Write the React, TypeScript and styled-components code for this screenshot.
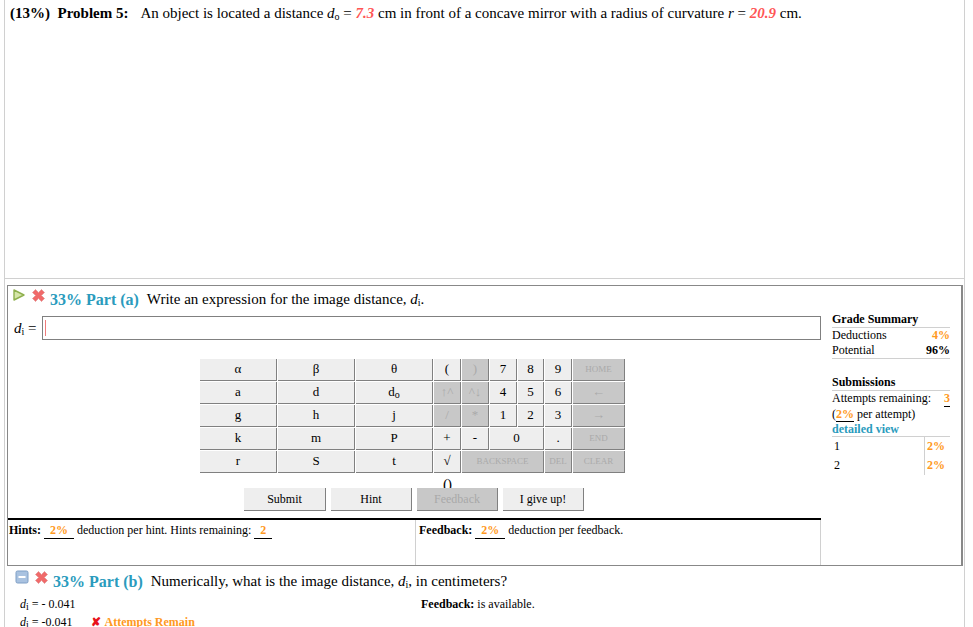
import React from 'react'
import styled, { createGlobalStyle } from 'styled-components'

const GlobalStyle = createGlobalStyle`
  html, body {
    margin: 0;
    padding: 0;
    background: #fff;
    overflow: hidden;
  }
  body {
    font-family: "Liberation Serif", "Times New Roman", serif;
    color: #000;
  }
`

const Page = styled.div`
  width: 973px;
  height: 627px;
  overflow: hidden;
  background: #fff;
`

const Shell = styled.div`
  box-sizing: border-box;
  margin-left: 4px;
  width: 961px;
  height: 627px;
  border-left: 1px solid #d0d0d0;
  border-right: 1px solid #d0d0d0;
`

const ProblemSection = styled.section`
  box-sizing: border-box;
  height: 279px;
  padding: 4px 0 0 5px;
  border-bottom: 1px solid #d0d0d0;
  font-size: 15px;
  line-height: 18px;
`

const ProblemTitle = styled.b`
  margin-right: 12px;
  white-space: pre;
`

const Given = styled.i`
  color: #ff5555;
  font-weight: bold;
`

const Sub = styled.sub`
  font-size: 10px;
  font-style: normal;
  line-height: 0;
  vertical-align: -2px;
`

const Var = styled.i`
  font-style: italic;
`

const PartBox = styled.section`
  box-sizing: border-box;
  margin: 6px 0 0 2px;
  width: 956px;
  height: 281px;
  border: 1px solid #888;
  border-right-width: 2px;
  border-bottom-width: 1px;
  display: flex;
`

const PartMain = styled.div`
  width: 813px;
  flex: none;
  display: flex;
  flex-direction: column;
`

const PartHeading = styled.div`
  display: flex;
  align-items: center;
  height: 27px;
  padding-left: 4px;
  font-size: 15px;
  white-space: pre;
`

const IconSlot = styled.span`
  display: inline-flex;
  width: 16px;
  height: 16px;
  margin-right: 3px;
  align-self: flex-start;
  margin-top: 2px;
`

const PartLabel = styled.b`
  font-size: 16px;
  color: #2a9bbd;
  margin-right: 8px;
`

const AnswerRow = styled.div`
  display: flex;
  align-items: center;
  height: 26px;
  margin-top: 2px;
  padding-left: 6px;
  font-size: 15px;
`

const AnswerLabel = styled.span`
  width: 28px;
  flex: none;
`

const AnswerInput = styled.div`
  box-sizing: border-box;
  flex: 1;
  height: 24px;
  border: 1px solid #808080;
  padding: 3px 0 0 2px;
`

const Caret = styled.div`
  width: 1px;
  height: 16px;
  background: #ef7b7b;
`

const Keypad = styled.div`
  display: grid;
  grid-template-columns: 77px 77px 77px 27px 27px 27px 26px 27px 52px;
  grid-auto-rows: 22px;
  gap: 1px;
  margin: 18px 0 0 192px;
  width: 427px;
`

const Key = styled.div<{ $off?: boolean; $span?: number; $small?: boolean }>`
  box-sizing: border-box;
  grid-column: span ${p => p.$span ?? 1};
  background: ${p => (p.$off ? '#c8c8c8' : '#eeeeee')};
  color: ${p => (p.$off ? '#aaaaaa' : '#000')};
  border-right: 1px solid #808080;
  border-bottom: 1px solid #808080;
  font-size: ${p => (p.$small ? '9px' : '13px')};
  line-height: 20px;
  text-align: center;
  white-space: nowrap;
`

const KeyFold = styled.span`
  display: block;
  letter-spacing: -1px;
  color: #000;
  margin-top: 3px;
  font-size: 15px;
`

const ActionRow = styled.div`
  display: flex;
  gap: 5px;
  margin: 15px 0 0 236px;
`

const ActionButton = styled.div<{ $width: number; $off?: boolean }>`
  box-sizing: border-box;
  width: ${p => p.$width}px;
  height: 23px;
  background: ${p => (p.$off ? '#c8c8c8' : '#eeeeee')};
  color: ${p => (p.$off ? '#a8a8a8' : '#000')};
  border-right: 1px solid #808080;
  border-bottom: 1px solid #808080;
  font-size: 12px;
  line-height: 22px;
  text-align: center;
`

const InfoRow = styled.div`
  flex: 1;
  display: grid;
  grid-template-columns: 407px 1fr;
  margin-top: 7px;
  border-top: 2px solid #000;
  font-size: 12px;
`

const InfoCell = styled.div<{ $last?: boolean }>`
  padding: 3px 0 0 ${p => (p.$last ? '3px' : '1px')};
  border-left: ${p => (p.$last ? '1px solid #d0d0d0' : 'none')};
  border-right: ${p => (p.$last ? '1px solid #d0d0d0' : 'none')};
  white-space: pre;
`

const Rate = styled.b`
  display: inline-block;
  padding: 0 6px;
  margin: 0 3px;
  color: #ff9922;
  border-bottom: 1px solid #000;
  line-height: 15px;
`

const Side = styled.aside`
  width: 118px;
  margin-left: 11px;
  padding-top: 26px;
  font-size: 12px;
  line-height: 15px;
`

const SideTitle = styled.div`
  font-weight: bold;
  border-bottom: 1px solid #d0d0d0;
`

const SideRow = styled.div<{ $line?: boolean }>`
  display: flex;
  justify-content: space-between;
  border-bottom: ${p => (p.$line ? '1px solid #d0d0d0' : 'none')};
`

const Orange = styled.b`
  color: #ff9922;
`

const Underlined = styled(Orange)`
  border-bottom: 1px solid #000;
`

const SideGap = styled.div`
  height: 16px;
`

const DetailLink = styled.div`
  color: #2a9bbd;
  font-weight: bold;
  border-bottom: 1px solid #d0d0d0;
  line-height: 14px;
`

const HistoryRow = styled.div`
  display: grid;
  grid-template-columns: 93px 1fr;
  line-height: 19px;
`

const HistoryNum = styled.span`
  padding-left: 2px;
  border-right: 1px solid #d0d0d0;
`

const HistoryRate = styled(Orange)`
  padding-left: 2px;
`

const PartB = styled.section`
  padding: 2px 0 0 6px;
`

const PriorRow = styled.div`
  display: grid;
  grid-template-columns: 401px 1fr;
  padding-left: 9px;
  font-size: 12px;
  line-height: 18px;
`

const PriorLine = styled.div`
  padding-left: 9px;
  font-size: 12px;
  line-height: 18px;
  display: flex;
  white-space: pre;
`

const Attempt = styled.b`
  margin-left: 18px;
  color: #ff9922;
`

const Cross = styled.span`
  color: #e8131b;
  font-weight: bold;
  margin-right: 4px;
`

const Play = () => (
  <svg width="14" height="14" viewBox="0 0 14 14">
    <path d="M2 2 L12 7 L2 12 Z" fill="#d6e6a8" stroke="#8fb04e" strokeWidth="1.4" strokeLinejoin="round" />
  </svg>
)

const Minus = () => (
  <svg width="14" height="14" viewBox="0 0 14 14">
    <rect x="1" y="1" width="12" height="12" rx="1.5" fill="#a9c2e0" stroke="#7f9fc6" />
    <rect x="3.5" y="6" width="7" height="2" fill="#fff" />
  </svg>
)

const RedX = () => (
  <svg width="15" height="15" viewBox="0 0 15 15">
    <path d="M4.5 1.5 L7.5 4.5 L10.5 1.5 L13.5 4.5 L10.5 7.5 L13.5 10.5 L10.5 13.5 L7.5 10.5 L4.5 13.5 L1.5 10.5 L4.5 7.5 L1.5 4.5 Z" fill="#f06a6a" stroke="#e7a0a0" strokeWidth="1" strokeLinejoin="round" />
  </svg>
)

type KeyDef = { t: React.ReactNode; off?: boolean; span?: number; small?: boolean }

const keys: KeyDef[] = [
  { t: 'α' }, { t: 'β' }, { t: 'θ' }, { t: '(' }, { t: ')', off: true }, { t: '7' }, { t: '8' }, { t: '9' }, { t: 'HOME', off: true, small: true },
  { t: 'a' }, { t: 'd' }, { t: <>d<Sub>o</Sub></> }, { t: '↑^', off: true }, { t: '^↓', off: true }, { t: '4' }, { t: '5' }, { t: '6' }, { t: '←', off: true },
  { t: 'g' }, { t: 'h' }, { t: 'j' }, { t: '/', off: true }, { t: '*', off: true }, { t: '1' }, { t: '2' }, { t: '3' }, { t: '→', off: true },
  { t: 'k' }, { t: 'm' }, { t: 'P' }, { t: '+' }, { t: '-' }, { t: '0', span: 2 }, { t: '.' }, { t: 'END', off: true, small: true },
  { t: 'r' }, { t: 'S' }, { t: 't' }, { t: <>√<KeyFold>()</KeyFold></> }, { t: 'BACKSPACE', off: true, span: 3, small: true }, { t: 'DEL', off: true, small: true }, { t: 'CLEAR', off: true, small: true },
]

const Di = () => <Var>d<Sub>i</Sub></Var>

export default function App() {
  return (
    <Page>
      <GlobalStyle />
      <Shell>
        <ProblemSection>
          <ProblemTitle>{'(13%)  Problem 5:'}</ProblemTitle>
          An object is located a distance <Var>d<Sub>o</Sub></Var> = <Given>7.3</Given> cm in front of a concave mirror with a radius of curvature <Var>r</Var> = <Given>20.9</Given> cm.
        </ProblemSection>

        <PartBox>
          <PartMain>
            <PartHeading>
              <IconSlot><Play /></IconSlot>
              <IconSlot><RedX /></IconSlot>
              <PartLabel>33% Part (a)</PartLabel>
              Write an expression for the image distance, <Di />.
            </PartHeading>
            <AnswerRow>
              <AnswerLabel><Di /> =</AnswerLabel>
              <AnswerInput><Caret /></AnswerInput>
            </AnswerRow>
            <Keypad>
              {keys.map((k, i) => (
                <Key key={i} $off={k.off} $span={k.span} $small={k.small}>{k.t}</Key>
              ))}
            </Keypad>
            <ActionRow>
              <ActionButton $width={82}>Submit</ActionButton>
              <ActionButton $width={81}>Hint</ActionButton>
              <ActionButton $width={81} $off>Feedback</ActionButton>
              <ActionButton $width={81}>I give up!</ActionButton>
            </ActionRow>
            <InfoRow>
              <InfoCell>
                <b>Hints:</b><Rate>2%</Rate>deduction per hint. Hints remaining:<Rate>2</Rate>
              </InfoCell>
              <InfoCell $last>
                <b>Feedback:</b><Rate>2%</Rate>deduction per feedback.
              </InfoCell>
            </InfoRow>
          </PartMain>

          <Side>
            <SideTitle>Grade Summary</SideTitle>
            <SideRow>Deductions<Orange>4%</Orange></SideRow>
            <SideRow $line>Potential<b>96%</b></SideRow>
            <SideGap />
            <SideTitle>Submissions</SideTitle>
            <SideRow>Attempts remaining: <Underlined>3</Underlined></SideRow>
            <div>(<Underlined>2%</Underlined> per attempt)</div>
            <DetailLink>detailed view</DetailLink>
            <HistoryRow><HistoryNum>1</HistoryNum><HistoryRate>2%</HistoryRate></HistoryRow>
            <HistoryRow><HistoryNum>2</HistoryNum><HistoryRate>2%</HistoryRate></HistoryRow>
          </Side>
        </PartBox>

        <PartB>
          <PartHeading>
            <IconSlot><Minus /></IconSlot>
            <IconSlot><RedX /></IconSlot>
            <PartLabel>33% Part (b)</PartLabel>
            Numerically, what is the image distance, <Di />, in centimeters?
          </PartHeading>
          <PriorRow>
            <span><Di /> = - 0.041</span>
            <span><b>Feedback:</b> is available.</span>
          </PriorRow>
          <PriorLine>
            <Di /> = -0.041
            <Attempt><Cross>✘</Cross>Attempts Remain</Attempt>
          </PriorLine>
        </PartB>
      </Shell>
    </Page>
  )
}
